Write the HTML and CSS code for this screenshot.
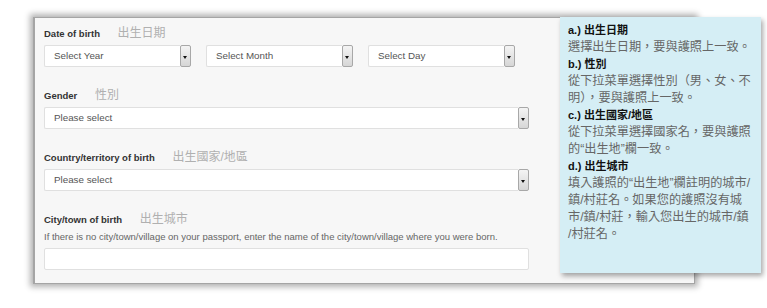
FILE: index.html
```html
<!DOCTYPE html>
<html lang="zh-Hant">
<head>
  <meta charset="UTF-8" />
  <title>Place of birth</title>
  <link rel="stylesheet" href="styles.css">
</head>
<body>
  <div class="page">
    <div class="card">
      <div class="group">
        <div class="label">Date of birth <span class="zh">出生日期</span></div>
        <div class="row">
          <div class="select short"><span>Select Year</span><i class="arrow"></i></div>
          <div class="select short"><span>Select Month</span><i class="arrow"></i></div>
          <div class="select short"><span>Select Day</span><i class="arrow"></i></div>
        </div>
      </div>

      <div class="group">
        <div class="label">Gender <span class="zh">性別</span></div>
        <div class="select"><span>Please select</span><i class="arrow"></i></div>
      </div>

      <div class="group">
        <div class="label">Country/territory of birth <span class="zh">出生國家/地區</span></div>
        <div class="select"><span>Please select</span><i class="arrow"></i></div>
      </div>

      <div class="group last">
        <div class="label">City/town of birth <span class="zh">出生城市</span></div>
        <p class="hint">If there is no city/town/village on your passport, enter the name of the city/town/village where you were born.</p>
        <input type="text" class="text-input">
      </div>
    </div>

    <div class="help">
      <h5>a.) 出生日期</h5>
      <p>選擇出生日期，要與護照上一致。</p>
      <h5>b.) 性別</h5>
      <p>從下拉菜單選擇性別（男、女、不<br>明），要與護照上一致。</p>
      <h5>c.) 出生國家/地區</h5>
      <p>從下拉菜單選擇國家名，要與護照<br>的“出生地”欄一致。</p>
      <h5>d.) 出生城市</h5>
      <p>填入護照的“出生地”欄註明的城市/<br>鎮/村莊名。如果您的護照沒有城<br>市/鎮/村莊，輸入您出生的城市/鎮<br>/村莊名。</p>
    </div>
  </div>
</body>
</html>
```

FILE: styles.css
```css
body {
  margin: 0;
  background: #fff;
  font-family: 'Liberation Sans', 'Noto Sans CJK TC', sans-serif;
}

.page {
  position: relative;
  padding: 17px 0 0 33px;
  height: 291px;
}

.card {
  width: 650px;
  padding: 7px 0 13px 9px;
  background: #f7f7f7;
  border: 1px solid #a5a5a5;
  border-left-width: 2px;
  box-shadow: 0 0 6px 3px rgba(0, 0, 0, 0.3);
}

.group {
  margin-bottom: 20px;
}

.group.last {
  margin-bottom: 0;
}

.label {
  height: 16px;
  line-height: 16px;
  margin-bottom: 4px;
  font-size: 9.5px;
  font-weight: bold;
  color: #333;
}

.label .zh {
  margin-left: 15px;
  font-size: 12px;
  font-weight: normal;
  color: #b0b0b0;
}

.row {
  display: flex;
  gap: 15px;
}

.select {
  display: flex;
  width: 485px;
  height: 22px;
}

.select.short {
  width: 147px;
}

.select span {
  flex: 1;
  padding-left: 9px;
  background: #fff;
  border: 1px solid #e0e0e0;
  border-right: none;
  border-radius: 2px 0 0 2px;
  font-size: 9.8px;
  line-height: 20px;
  color: #555;
}

.arrow {
  position: relative;
  width: 9px;
  background: linear-gradient(#f4f4f4, #d6d6d6);
  border: 1px solid #a8a8a8;
  border-radius: 2px;
}

.arrow::after {
  content: '';
  position: absolute;
  left: 2px;
  top: 10px;
  border-left: 2.5px solid transparent;
  border-right: 2.5px solid transparent;
  border-top: 3px solid #111;
}

.hint {
  margin: 0 0 5px;
  font-size: 9.5px;
  line-height: 12px;
  color: #666;
}

.text-input {
  display: block;
  box-sizing: border-box;
  width: 485px;
  height: 22px;
  margin: 0;
  background: #fff;
  border: 1px solid #e0e0e0;
  border-radius: 2px;
}

.help {
  position: absolute;
  left: 560px;
  top: 17px;
  box-sizing: border-box;
  width: 201px;
  height: 256px;
  padding: 5px 0 0 8px;
  background: #d5eef5;
  box-shadow: 2px 3px 5px rgba(0, 0, 0, 0.35);
}

.help h5 {
  margin: 0;
  font-size: 11px;
  line-height: 17px;
  font-weight: bold;
  color: #111;
}

.help p {
  margin: 0;
  font-size: 12.2px;
  line-height: 17px;
  white-space: nowrap;
  color: #666;
}
```
